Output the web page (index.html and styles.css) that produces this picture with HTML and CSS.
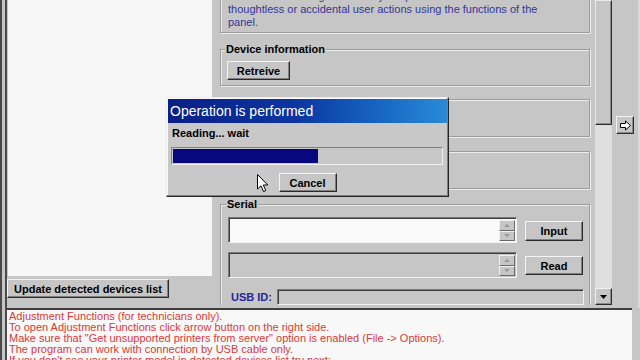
FILE: index.html
```html
<!DOCTYPE html>
<html lang="en">
<head>
    <meta charset="UTF-8">
    <title>Adjustment Program</title>
    <link rel="stylesheet" href="styles.css">
</head>
<body>
<div class="app">

    <!-- Top area: devices list + settings panel -->
    <div class="main">
        <div class="devices">
            <div class="device-list"></div>
            <button class="btn btn-update">Update detected devices list</button>
        </div>

        <div class="panel">
            <div class="panel-scroll">
                <div class="panel-inner">
                    <fieldset class="group group-note">
                        <p class="note">not liable for damage caused by the printer as a result of<br>
                            thoughtless or accidental user actions using the functions of the<br>
                            panel.</p>
                    </fieldset>

                    <fieldset class="group">
                        <legend>Device information</legend>
                        <button class="btn btn-retreive">Retreive</button>
                    </fieldset>

                    <fieldset class="group group-empty"></fieldset>
                    <fieldset class="group group-empty group-empty-2"></fieldset>

                    <fieldset class="group group-serial">
                        <legend>Serial</legend>
                        <div class="serial-row">
                            <div class="field spin-field spin-field-white">
                                <div class="spin">
                                    <span class="spin-btn"><svg width="6" height="3" viewBox="0 0 6 3"><path d="M0 3 L3 0 L6 3 Z" fill="#9a9a9a"/></svg></span>
                                    <span class="spin-btn"><svg width="6" height="3" viewBox="0 0 6 3"><path d="M0 0 L6 0 L3 3 Z" fill="#9a9a9a"/></svg></span>
                                </div>
                            </div>
                            <button class="btn btn-side">Input</button>
                        </div>
                        <div class="serial-row serial-row-2">
                            <div class="field spin-field">
                                <div class="spin">
                                    <span class="spin-btn"><svg width="6" height="3" viewBox="0 0 6 3"><path d="M0 3 L3 0 L6 3 Z" fill="#9a9a9a"/></svg></span>
                                    <span class="spin-btn"><svg width="6" height="3" viewBox="0 0 6 3"><path d="M0 0 L6 0 L3 3 Z" fill="#9a9a9a"/></svg></span>
                                </div>
                            </div>
                            <button class="btn btn-side btn-read">Read</button>
                        </div>
                        <div class="usb-row">
                            <span class="usb-label">USB ID:</span>
                            <div class="field usb-field"></div>
                        </div>
                    </fieldset>
                </div>
            </div>

            <!-- Scrollbar -->
            <div class="vscroll">
                <div class="thumb"></div>
                <div class="track"></div>
                <div class="vscroll-btn">
                    <svg width="7" height="4" viewBox="0 0 7 4"><path d="M0 0 L7 0 L3.5 4 Z" fill="#000"/></svg>
                </div>
            </div>
        </div>

        <div class="side">
            <button class="arrow-btn">
                <svg width="13" height="11" viewBox="0 0 13 11"><path d="M1.5 3.5 H6.5 V1 L11.5 5.5 L6.5 10 V7.5 H1.5 Z" fill="#fff" stroke="#000" stroke-width="1"/></svg>
            </button>
        </div>
    </div>

    <!-- Log -->
    <div class="log">
        <div>Adjustment Functions (for technicians only).</div>
        <div>To open Adjustment Functions click arrow button on the right side.</div>
        <div>Make sure that &quot;Get unsupported printers from server&quot; option is enabled (File -&gt; Options).</div>
        <div>The program can work with connection by USB cable only.</div>
        <div>If you don't see your printer model in detected devices list try next:</div>
    </div>

    <!-- Progress dialog -->
    <div class="dialog">
        <div class="dialog-title">Operation is performed</div>
        <div class="dialog-body">
            <div class="dialog-msg">Reading... wait</div>
            <div class="progress"><div class="progress-fill" style="width: 54%"></div></div>
            <div class="dialog-actions">
                <button class="btn btn-cancel">Cancel</button>
            </div>
        </div>
    </div>

    <svg class="cursor" width="12" height="19" viewBox="0 0 12 19">
        <path d="M0.5 0.5 L0.5 15 L4 11.8 L6.6 17.6 L8.8 16.6 L6.3 11 L10.8 11 Z" fill="#fff" stroke="#000" stroke-width="1" stroke-linejoin="miter"/>
    </svg>
</div>
</body>
</html>
```

FILE: styles.css
```css
* {
    box-sizing: border-box;
}

body {
    margin: 0;
    background-color: #c6c6c6;
    font-family: "Liberation Sans", Arial, sans-serif;
    font-size: 11px;
    color: #000;
}

.app {
    position: relative;
    width: 640px;
    height: 360px;
    overflow: hidden;
    border-left: 7px double #4a4a4a;
    display: flex;
    flex-direction: column;
}

/* Buttons (classic raised) */
.btn {
    font-family: "Liberation Sans", Arial, sans-serif;
    font-size: 11px;
    font-weight: bold;
    color: #000;
    background-color: #c6c6c6;
    border: 1px solid;
    border-color: #f4f4f4 #2a2a2a #2a2a2a #f4f4f4;
    box-shadow: inset -1px -1px 0 #808080;
    height: 19px;
    padding: 0;
    line-height: 16px;
}

/* Sunken field */
.field {
    border: 1px solid;
    border-color: #7a7a7a #f2f2f2 #f2f2f2 #7a7a7a;
    box-shadow: inset 1px 1px 0 #3c3c3c;
    background-color: #c6c6c6;
}

/* Top area */
.main {
    display: flex;
    height: 308px;
}

.devices {
    width: 205px;
    display: flex;
    flex-direction: column;
    padding-bottom: 10px;
}

.device-list {
    flex: 1;
    margin-left: 1px;
    background-color: #f6f6f6;
}

.btn-update {
    width: 162px;
    margin-top: 3px;
}

.panel {
    display: flex;
    width: 400px;
}

.panel-scroll {
    width: 383px;
    height: 305px;
    overflow: hidden;
    padding: 0 5px 0 8px;
}

.panel-inner {
    margin-top: -11px;
}

/* Group boxes */
.group {
    margin: 0;
    min-width: 0;
    padding: 5px 6px 5px;
    border: 1px solid #9c9c9c;
    box-shadow: 1px 1px 0 #ececec, inset 1px 1px 0 #ececec;
}

.group legend {
    font-weight: bold;
    line-height: 13px;
    padding: 0 1px;
    margin-left: -2px;
    background-color: #c6c6c6;
}

.group + .group {
    margin-top: 10px;
}

.group-note {
    padding: 0 7px 3px;
}

.note {
    margin: 0;
    line-height: 13px;
    color: #34349a;
    white-space: nowrap;
}

.btn-retreive {
    width: 63px;
    margin-top: 0;
}

.group-empty {
    height: 38px;
}

.group + .group-empty {
    margin-top: 13px;
}

.group + .group-empty-2 {
    margin-top: 14px;
}

.group + .group-serial {
    margin-top: 9px;
}

.group-serial {
    padding: 6px 5px 0 7px;
}

.serial-row {
    display: flex;
    align-items: center;
    gap: 8px;
}

.serial-row-2 {
    margin-top: 9px;
}

.spin-field {
    width: 289px;
    height: 26px;
    display: flex;
    justify-content: flex-end;
    padding: 2px 1px 1px 2px;
}

.spin-field-white {
    background-color: #fafafa;
}

.spin {
    width: 16px;
    display: flex;
    flex-direction: column;
}

.spin-btn {
    flex: 1;
    display: flex;
    align-items: center;
    justify-content: center;
    background-color: #c6c6c6;
    border: 1px solid;
    border-color: #f0f0f0 #6a6a6a #6a6a6a #f0f0f0;
}

.btn-side {
    width: 58px;
    height: 20px;
    margin-top: 1px;
}

.btn-read {
    height: 19px;
}

.usb-row {
    display: flex;
    align-items: center;
    margin-top: 11px;
    padding-left: 3px;
}

.usb-label {
    font-weight: bold;
    color: #2424a0;
    width: 46px;
}

.usb-field {
    flex: 1;
    height: 16px;
}

/* Scrollbar */
.vscroll {
    width: 17px;
    height: 305px;
    display: flex;
    flex-direction: column;
}

.thumb {
    height: 125px;
    background-color: #c6c6c6;
    border: 1px solid;
    border-color: #e8e8e8 #2e2e2e #2e2e2e #e8e8e8;
    box-shadow: inset -1px -1px 0 #8a8a8a;
}

.track {
    flex: 1;
    background-color: #dedede;
}

.vscroll-btn {
    height: 17px;
    display: flex;
    align-items: center;
    justify-content: center;
    background-color: #c6c6c6;
    border: 1px solid;
    border-color: #efefef #2e2e2e #2e2e2e #efefef;
    box-shadow: inset -1px -1px 0 #8a8a8a;
}

.side {
    flex: 1;
    padding: 116px 0 0 4px;
    border-right: 2px solid #dadada;
}

.arrow-btn {
    width: 18px;
    height: 18px;
    padding: 0;
    display: flex;
    align-items: center;
    justify-content: center;
    background-color: #c6c6c6;
    border: 1px solid;
    border-color: #f2f2f2 #2e2e2e #2e2e2e #f2f2f2;
    box-shadow: inset -1px -1px 0 #8a8a8a;
}

/* Log */
.log {
    flex: 1;
    margin-right: 8px;
    background-color: #f8f8f8;
    border-top: 2px solid #3e3e3e;
    padding: 1px 2px 0;
    color: #d83a3a;
    line-height: 11px;
    overflow: hidden;
    white-space: nowrap;
}

/* Progress dialog */
.dialog {
    position: absolute;
    left: 159px;
    top: 97px;
    width: 283px;
    height: 100px;
    background-color: #c8c8c8;
    border: 1px solid;
    border-color: #ececec #262626 #262626 #ececec;
    box-shadow: inset -1px -1px 0 #7e7e7e, inset 1px 1px 0 #fafafa;
    padding: 1px;
}

.dialog-title {
    height: 24px;
    line-height: 24px;
    padding-left: 2px;
    font-size: 14px;
    color: #fff;
    background: linear-gradient(90deg, #0a1f86 0%, #0c35a0 45%, #1665c0 75%, #2a8ad8 100%);
}

.dialog-body {
    padding: 4px 3px 0;
}

.dialog-msg {
    font-weight: bold;
    line-height: 13px;
    padding-left: 1px;
}

.progress {
    margin-top: 7px;
    width: 272px;
    height: 18px;
    border: 1px solid;
    border-color: #808080 #f0f0f0 #f0f0f0 #808080;
    padding: 1px;
}

.progress-fill {
    height: 100%;
    background-color: #08087e;
}

.dialog-actions {
    display: flex;
    justify-content: center;
    margin-top: 8px;
}

.btn-cancel {
    width: 58px;
}

.cursor {
    position: absolute;
    left: 250px;
    top: 174px;
}
```
